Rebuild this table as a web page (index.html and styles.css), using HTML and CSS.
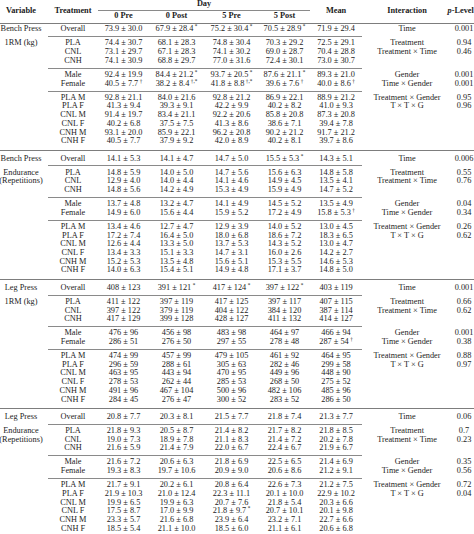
FILE: index.html
```html
<!DOCTYPE html>
<html>
<head>
<meta charset="utf-8">
<link rel="stylesheet" href="styles.css">
</head>
<body>
<table class="tbl">
<colgroup>
<col class="c-var"><col class="c-trt"><col class="c-d1"><col class="c-d2"><col class="c-d3"><col class="c-d4"><col class="c-mean"><col class="c-int"><col class="c-p">
</colgroup>
<thead>
<tr class="h1">
<th rowspan="2" class="hb">Variable</th><th rowspan="2" class="hb">Treatment</th><th colspan="4" class="day">Day</th><th rowspan="2" class="hb">Mean</th><th rowspan="2" class="hb">Interaction</th><th rowspan="2" class="hb pl"><i>p</i>-Level</th>
</tr>
<tr class="h2"><th>0 Pre</th><th>0 Post</th><th>5 Pre</th><th>5 Post</th></tr>
</thead>
<tbody>
<!-- Bench Press 1RM -->
<tr class="first ge"><td>Bench Press</td><td>Overall</td><td>73.9 ± 30.0</td><td>67.9 ± 28.4<sup>*</sup></td><td>75.2 ± 30.4<sup>*</sup></td><td>70.5 ± 28.9<sup>*</sup></td><td>71.9 ± 29.4</td><td>Time</td><td>0.001</td></tr>
<tr class="gs"><td>1RM (kg)</td><td>PLA</td><td>74.4 ± 30.7</td><td>68.1 ± 28.3</td><td>74.8 ± 30.4</td><td>70.3 ± 29.2</td><td>72.5 ± 29.1</td><td>Treatment</td><td>0.94</td></tr>
<tr><td></td><td>CNL</td><td>73.1 ± 29.7</td><td>67.1 ± 28.3</td><td>74.1 ± 30.2</td><td>69.0 ± 28.7</td><td>70.4 ± 28.8</td><td>Treatment × Time</td><td>0.46</td></tr>
<tr class="ge"><td></td><td>CNH</td><td>74.1 ± 30.9</td><td>68.8 ± 29.7</td><td>77.0 ± 31.6</td><td>72.4 ± 30.1</td><td>73.0 ± 30.7</td><td></td><td></td></tr>
<tr class="gs"><td></td><td>Male</td><td>92.4 ± 19.9</td><td>84.4 ± 21.2<sup>*</sup></td><td>93.7 ± 20.5<sup>*</sup></td><td>87.6 ± 21.1<sup>*</sup></td><td>89.3 ± 21.0</td><td>Gender</td><td>0.001</td></tr>
<tr class="ge"><td></td><td>Female</td><td>40.5 ± 7.7<sup>†</sup></td><td>38.2 ± 8.4<sup>†,*</sup></td><td>41.8 ± 8.8<sup>†,*</sup></td><td>39.6 ± 7.6<sup>†</sup></td><td>40.0 ± 8.6<sup>†</sup></td><td>Time × Gender</td><td>0.001</td></tr>
<tr class="gs"><td></td><td>PLA M</td><td>92.8 ± 21.1</td><td>84.0 ± 21.6</td><td>92.8 ± 21.2</td><td>86.9 ± 22.1</td><td>88.9 ± 21.2</td><td>Treatment × Gender</td><td>0.95</td></tr>
<tr><td></td><td>PLA F</td><td>41.3 ± 9.4</td><td>39.3 ± 9.1</td><td>42.2 ± 9.9</td><td>40.2 ± 8.2</td><td>41.0 ± 9.3</td><td>T × T × G</td><td>0.96</td></tr>
<tr><td></td><td>CNL M</td><td>91.4 ± 19.7</td><td>83.4 ± 21.1</td><td>92.2 ± 20.6</td><td>85.8 ± 20.8</td><td>87.3 ± 20.8</td><td></td><td></td></tr>
<tr><td></td><td>CNL F</td><td>40.2 ± 6.8</td><td>37.5 ± 7.5</td><td>41.3 ± 8.6</td><td>38.6 ± 7.1</td><td>39.4 ± 7.8</td><td></td><td></td></tr>
<tr><td></td><td>CNH M</td><td>93.1 ± 20.0</td><td>85.9 ± 22.1</td><td>96.2 ± 20.8</td><td>90.2 ± 21.2</td><td>91.7 ± 21.2</td><td></td><td></td></tr>
<tr class="be"><td></td><td>CNH F</td><td>40.5 ± 7.7</td><td>37.9 ± 9.2</td><td>42.0 ± 8.9</td><td>40.2 ± 8.1</td><td>39.7 ± 8.6</td><td></td><td></td></tr>
<!-- Bench Press Endurance -->
<tr class="bs ge"><td>Bench Press</td><td>Overall</td><td>14.1 ± 5.3</td><td>14.1 ± 4.7</td><td>14.7 ± 5.0</td><td>15.5 ± 5.3<sup>*</sup></td><td>14.3 ± 5.1</td><td>Time</td><td>0.006</td></tr>
<tr class="gs"><td>Endurance</td><td>PLA</td><td>14.8 ± 5.9</td><td>14.0 ± 5.0</td><td>14.7 ± 5.6</td><td>15.6 ± 6.3</td><td>14.8 ± 5.8</td><td>Treatment</td><td>0.55</td></tr>
<tr><td>(Repetitions)</td><td>CNL</td><td>12.9 ± 4.0</td><td>14.0 ± 4.4</td><td>14.1 ± 4.6</td><td>14.9 ± 4.5</td><td>13.5 ± 4.1</td><td>Treatment × Time</td><td>0.76</td></tr>
<tr class="ge"><td></td><td>CNH</td><td>14.8 ± 5.6</td><td>14.2 ± 4.9</td><td>15.3 ± 4.9</td><td>15.9 ± 4.9</td><td>14.7 ± 5.2</td><td></td><td></td></tr>
<tr class="gs"><td></td><td>Male</td><td>13.7 ± 4.8</td><td>13.2 ± 4.7</td><td>14.1 ± 4.9</td><td>14.5 ± 5.2</td><td>13.5 ± 4.9</td><td>Gender</td><td>0.04</td></tr>
<tr class="ge"><td></td><td>Female</td><td>14.9 ± 6.0</td><td>15.6 ± 4.4</td><td>15.9 ± 5.2</td><td>17.2 ± 4.9</td><td>15.8 ± 5.3<sup>†</sup></td><td>Time × Gender</td><td>0.34</td></tr>
<tr class="gs"><td></td><td>PLA M</td><td>13.4 ± 4.6</td><td>12.7 ± 4.7</td><td>12.9 ± 3.9</td><td>14.0 ± 5.2</td><td>13.0 ± 4.5</td><td>Treatment × Gender</td><td>0.26</td></tr>
<tr><td></td><td>PLA F</td><td>17.2 ± 7.4</td><td>16.4 ± 5.0</td><td>18.0 ± 6.8</td><td>18.6 ± 7.2</td><td>18.3 ± 6.5</td><td>T × T × G</td><td>0.62</td></tr>
<tr><td></td><td>CNL M</td><td>12.6 ± 4.4</td><td>13.3 ± 5.0</td><td>13.7 ± 5.3</td><td>14.3 ± 5.2</td><td>13.0 ± 4.7</td><td></td><td></td></tr>
<tr><td></td><td>CNL F</td><td>13.4 ± 3.3</td><td>15.1 ± 3.3</td><td>14.7 ± 3.1</td><td>16.0 ± 2.6</td><td>14.2 ± 2.7</td><td></td><td></td></tr>
<tr><td></td><td>CNH M</td><td>15.2 ± 5.3</td><td>13.5 ± 4.8</td><td>15.6 ± 5.1</td><td>15.3 ± 5.5</td><td>14.6 ± 5.3</td><td></td><td></td></tr>
<tr class="be"><td></td><td>CNH F</td><td>14.0 ± 6.3</td><td>15.4 ± 5.1</td><td>14.9 ± 4.8</td><td>17.1 ± 3.7</td><td>14.8 ± 5.0</td><td></td><td></td></tr>
<!-- Leg Press 1RM -->
<tr class="bs ge"><td>Leg Press</td><td>Overall</td><td>408 ± 123</td><td>391 ± 121<sup>*</sup></td><td>417 ± 124<sup>*</sup></td><td>397 ± 122<sup>*</sup></td><td>403 ± 119</td><td>Time</td><td>0.001</td></tr>
<tr class="gs"><td>1RM (kg)</td><td>PLA</td><td>411 ± 122</td><td>397 ± 119</td><td>417 ± 125</td><td>397 ± 117</td><td>407 ± 115</td><td>Treatment</td><td>0.66</td></tr>
<tr><td></td><td>CNL</td><td>397 ± 122</td><td>379 ± 119</td><td>404 ± 122</td><td>384 ± 120</td><td>387 ± 114</td><td>Treatment × Time</td><td>0.62</td></tr>
<tr class="ge"><td></td><td>CNH</td><td>417 ± 129</td><td>399 ± 128</td><td>428 ± 127</td><td>411 ± 132</td><td>414 ± 127</td><td></td><td></td></tr>
<tr class="gs"><td></td><td>Male</td><td>476 ± 96</td><td>456 ± 98</td><td>483 ± 98</td><td>464 ± 97</td><td>466 ± 94</td><td>Gender</td><td>0.001</td></tr>
<tr class="ge"><td></td><td>Female</td><td>286 ± 51</td><td>276 ± 50</td><td>297 ± 55</td><td>278 ± 48</td><td>287 ± 54<sup>†</sup></td><td>Time × Gender</td><td>0.38</td></tr>
<tr class="gs"><td></td><td>PLA M</td><td>474 ± 99</td><td>457 ± 99</td><td>479 ± 105</td><td>461 ± 92</td><td>464 ± 95</td><td>Treatment × Gender</td><td>0.88</td></tr>
<tr><td></td><td>PLA F</td><td>296 ± 59</td><td>288 ± 61</td><td>305 ± 63</td><td>282 ± 46</td><td>299 ± 58</td><td>T × T × G</td><td>0.97</td></tr>
<tr><td></td><td>CNL M</td><td>463 ± 95</td><td>443 ± 94</td><td>470 ± 95</td><td>449 ± 96</td><td>448 ± 90</td><td></td><td></td></tr>
<tr><td></td><td>CNL F</td><td>278 ± 53</td><td>262 ± 44</td><td>285 ± 53</td><td>268 ± 50</td><td>275 ± 52</td><td></td><td></td></tr>
<tr><td></td><td>CNH M</td><td>491 ± 96</td><td>467 ± 104</td><td>500 ± 96</td><td>482 ± 106</td><td>485 ± 96</td><td></td><td></td></tr>
<tr class="be"><td></td><td>CNH F</td><td>284 ± 45</td><td>276 ± 47</td><td>300 ± 52</td><td>283 ± 52</td><td>286 ± 50</td><td></td><td></td></tr>
<!-- Leg Press Endurance -->
<tr class="bs ge"><td>Leg Press</td><td>Overall</td><td>20.8 ± 7.7</td><td>20.3 ± 8.1</td><td>21.5 ± 7.7</td><td>21.8 ± 7.4</td><td>21.3 ± 7.7</td><td>Time</td><td>0.06</td></tr>
<tr class="gs"><td>Endurance</td><td>PLA</td><td>21.8 ± 9.3</td><td>20.5 ± 8.7</td><td>21.4 ± 8.2</td><td>21.7 ± 8.2</td><td>21.8 ± 8.5</td><td>Treatment</td><td>0.7</td></tr>
<tr><td>(Repetitions)</td><td>CNL</td><td>19.0 ± 7.3</td><td>18.9 ± 7.8</td><td>21.1 ± 8.3</td><td>21.4 ± 7.2</td><td>20.2 ± 7.8</td><td>Treatment × Time</td><td>0.23</td></tr>
<tr class="ge"><td></td><td>CNH</td><td>21.6 ± 5.9</td><td>21.4 ± 7.9</td><td>22.0 ± 6.7</td><td>22.4 ± 6.7</td><td>21.9 ± 6.7</td><td></td><td></td></tr>
<tr class="gs"><td></td><td>Male</td><td>21.6 ± 7.2</td><td>20.6 ± 6.3</td><td>21.8 ± 6.9</td><td>22.5 ± 6.5</td><td>21.4 ± 6.9</td><td>Gender</td><td>0.35</td></tr>
<tr class="ge"><td></td><td>Female</td><td>19.3 ± 8.3</td><td>19.7 ± 10.6</td><td>20.9 ± 9.0</td><td>20.6 ± 8.6</td><td>21.2 ± 9.1</td><td>Time × Gender</td><td>0.56</td></tr>
<tr class="gs"><td></td><td>PLA M</td><td>21.7 ± 9.1</td><td>20.2 ± 6.1</td><td>20.8 ± 6.4</td><td>22.6 ± 7.3</td><td>21.2 ± 7.5</td><td>Treatment × Gender</td><td>0.72</td></tr>
<tr><td></td><td>PLA F</td><td>21.9 ± 10.3</td><td>21.0 ± 12.4</td><td>22.3 ± 11.1</td><td>20.1 ± 10.0</td><td>22.9 ± 10.2</td><td>T × T × G</td><td>0.04</td></tr>
<tr><td></td><td>CNL M</td><td>19.9 ± 6.5</td><td>19.9 ± 6.3</td><td>20.7 ± 7.6</td><td>21.8 ± 5.4</td><td>20.3 ± 6.6</td><td></td><td></td></tr>
<tr><td></td><td>CNL F</td><td>17.5 ± 8.7</td><td>17.0 ± 9.9</td><td>21.8 ± 9.7<sup>*</sup></td><td>20.7 ± 10.1</td><td>20.1 ± 9.8</td><td></td><td></td></tr>
<tr><td></td><td>CNH M</td><td>23.3 ± 5.7</td><td>21.6 ± 6.8</td><td>23.9 ± 6.4</td><td>23.2 ± 7.1</td><td>22.7 ± 6.6</td><td></td><td></td></tr>
<tr class="be"><td></td><td>CNH F</td><td>18.5 ± 5.4</td><td>21.1 ± 10.0</td><td>18.5 ± 6.0</td><td>21.1 ± 6.1</td><td>20.6 ± 6.8</td><td></td><td></td></tr>
</tbody>
</table>
</body>
</html>
```

FILE: styles.css
```css
html, body {
  margin: 0;
  padding: 0;
  background: #ffffff;
}
body {
  width: 474px;
  height: 534px;
  overflow: hidden;
  font-family: "Liberation Serif", "Times New Roman", serif;
  font-size: 8.3px;
  color: #1c1c1c;
}
.tbl {
  border-collapse: separate;
  border-spacing: 0;
  table-layout: fixed;
  width: 482px;
  margin: 0 0 0 -6px;
}
.c-var { width: 54px; }
.c-trt { width: 50px; }
.c-d1 { width: 51px; }
.c-d2 { width: 55px; }
.c-d3 { width: 55px; }
.c-d4 { width: 51px; }
.c-mean { width: 52px; }
.c-int { width: 90px; }
.c-p { width: 24px; }

.tbl th,
.tbl td {
  padding: 0;
  line-height: 8.7px;
  text-align: center;
  white-space: nowrap;
  overflow: visible;
  vertical-align: top;
}
.tbl th {
  font-weight: bold;
}
.tbl th.hb {
  vertical-align: middle;
  border-bottom: 1px solid #7d7d7d;
}
.tbl th.pl {
  text-align: left;
  text-indent: -4.5px;
}
.tbl th.day {
  padding-bottom: 1px;
  border-bottom: 1px solid #8a8a8a;
}
.h2 th {
  padding-top: 1.5px;
  padding-bottom: 2px;
  border-bottom: 1px solid #7d7d7d;
}
.first td {
  padding-top: 1.5px;
}
.ge td {
  padding-bottom: 2.2px;
}
.be td {
  padding-bottom: 3.8px;
}
.gs td {
  padding-top: 2.2px;
  border-top: 1px solid transparent;
}
.gs td:nth-child(n+2):nth-child(-n+7) {
  border-top-color: #8a8a8a;
}
.bs td {
  padding-top: 3.8px;
  border-top: 1px solid #7d7d7d;
}
sup {
  font-size: 5.2px;
  line-height: 0;
  vertical-align: 3px;
  margin-left: 1.5px;
}
```
